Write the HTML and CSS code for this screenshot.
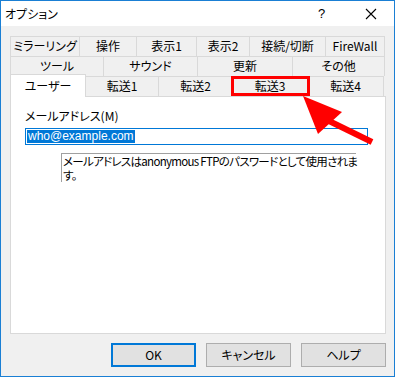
FILE: index.html
```html
<!DOCTYPE html>
<html>
<head>
<meta charset="utf-8">
<link rel="stylesheet" href="styles.css">
</head>
<body>
<div class="window">
  <div class="titlebar">
    <span class="title">オプション</span>
    <span class="tb-help">?</span>
    <span class="tb-close">
      <svg width="12" height="12" viewBox="0 0 12 12"><path d="M1 1L11 11M11 1L1 11" stroke="#000" stroke-width="1.1" fill="none"/></svg>
    </span>
  </div>
  <div class="body">
    <div class="tabs">
      <div class="tabrow">
        <div class="tab" style="width:69px">ミラーリング</div>
        <div class="tab" style="width:57px">操作</div>
        <div class="tab" style="width:60px">表示1</div>
        <div class="tab" style="width:53px">表示2</div>
        <div class="tab" style="width:76px">接続/切断</div>
        <div class="tab last" style="width:60px">FireWall</div>
      </div>
      <div class="tabrow">
        <div class="tab" style="width:93px">ツール</div>
        <div class="tab" style="width:94px">サウンド</div>
        <div class="tab" style="width:95px">更新</div>
        <div class="tab last" style="width:93px">その他</div>
      </div>
      <div class="tabrow front">
        <div class="tab selected" style="width:76px">ユーザー</div>
        <div class="tab" style="width:73px">転送1</div>
        <div class="tab" style="width:74px">転送2</div>
        <div class="tab marked" style="width:75px">転送3</div>
        <div class="tab last" style="width:77px">転送4</div>
      </div>
    </div>
    <div class="panel">
      <div class="label">メールアドレス(M)</div>
      <div class="input"><span class="sel">who@example.com</span></div>
      <div class="note">メールアドレスはanonymous FTPのパスワードとして使用されま<br>す。</div>
    </div>
    <div class="buttons">
      <div class="btn default">OK</div>
      <div class="btn">キャンセル</div>
      <div class="btn">ヘルプ</div>
    </div>
  </div>
  <svg class="arrow" width="395" height="377" viewBox="0 0 395 377">
    <polygon points="303,96 342,112 318,134" fill="#ff0000"/>
    <line x1="327" y1="120" x2="372" y2="142" stroke="#ff0000" stroke-width="6"/>
  </svg>
</div>
</body>
</html>
```
FILE: styles.css
```css
* { box-sizing: border-box; }
html, body { margin: 0; padding: 0; }
body {
  font-family: "Noto Sans CJK JP", "Noto Sans", sans-serif;
  font-size: 12px;
  font-feature-settings: "palt";
  color: #000;
  width: 395px;
  height: 377px;
  overflow: hidden;
}
.window {
  position: relative;
  width: 395px;
  height: 377px;
  border: 1px solid #1a7fd4;
  background: #f0f0f0;
  display: flex;
  flex-direction: column;
}
.titlebar {
  height: 25px;
  background: #fff;
  display: flex;
  align-items: center;
  line-height: 14px;
}
.title { margin-left: 4px; flex: 1; font-size: 12px; }
.tb-help { width: 14px; margin-right: 33px; font-family: "Liberation Sans", sans-serif; font-size: 13px; }
.tb-close { width: 12px; height: 12px; margin-right: 17px; display: flex; }
.body {
  flex: 1;
  padding: 10px 8px 0 9px;
  display: flex;
  flex-direction: column;
}
.tabs { display: flex; flex-direction: column; }
.tabrow { display: flex; height: 20px; }
.tab {
  height: 20px;
  border-top: 1px solid #d9d9d9;
  border-left: 1px solid #d9d9d9;
  text-align: center;
  line-height: 18px;
  background: #f0f0f0;
  white-space: nowrap;
}
.tab.last { border-right: 1px solid #d9d9d9; }
.tabrow.front { position: relative; z-index: 2; }
.tab.selected {
  background: #fff;
  height: 23px;
  margin-top: -2px;
  margin-right: -1px;
  border-right: 1px solid #d9d9d9;
  line-height: 21px;
  position: relative;
  z-index: 2;
}
.tab.marked { position: relative; }
.tab.marked::after {
  content: "";
  position: absolute;
  left: -2px;
  right: -3px;
  top: -1px;
  bottom: 0px;
  border: 3px solid #ff0000;
}
.panel {
  height: 238px;
  background: #fff;
  border: 1px solid #d9d9d9;
  padding: 11px 17px 0 14px;
}
.label { line-height: 16px; height: 16px; margin-bottom: 4px; }
.input {
  height: 17px;
  border: 1px solid #0078d7;
  padding: 1px 1px;
  display: flex;
  align-items: center;
  line-height: 13px;
}
.sel { background: #0078d7; color: #fff; padding: 0 1px; font-family: "Liberation Sans", sans-serif; font-size: 12px; line-height: 13px; }
.note {
  margin: 8px 0 0 36px;
  width: 295px;
  border-top: 1px solid #a0a0a0;
  border-left: 1px solid #a0a0a0;
  line-height: 14px;
  padding: 0 0 0 1px;
  font-size: 11.5px;
  letter-spacing: -0.7px;
  white-space: nowrap;
}
.buttons {
  display: flex;
  justify-content: flex-end;
  gap: 10px;
  margin-top: 9px;
  padding-right: 0;
}
.btn {
  width: 85px;
  height: 24px;
  background: #e1e1e1;
  border: 1px solid #adadad;
  text-align: center;
  line-height: 22px;
}
.btn.default { border: 2px solid #0078d7; line-height: 20px; }
.arrow { position: absolute; left: -1px; top: -1px; pointer-events: none; z-index: 5; }
```
